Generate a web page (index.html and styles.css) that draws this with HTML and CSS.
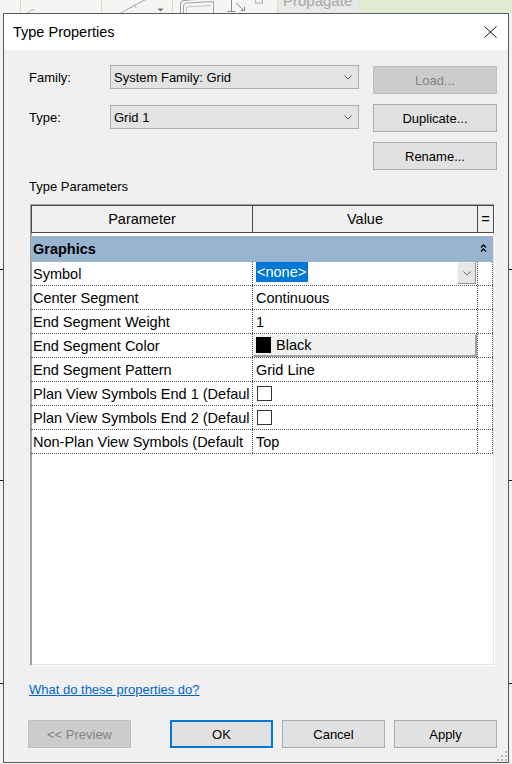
FILE: index.html
```html
<!DOCTYPE html>
<html lang="en">
<head>
<meta charset="utf-8">
<title>Type Properties</title>
<link rel="stylesheet" href="styles.css">
</head>
<body>
<div class="app">
  <div class="ribbon">
    <div class="rseg rseg-1"></div>
    <div class="rseg rseg-2">
      <svg class="ricon" width="80" height="13" viewBox="0 0 80 13"><path d="M6.5 13 L9.5 10.5 L14 9.5" fill="none" stroke="#b4b4b4"/></svg>
    </div>
    <div class="rseg rseg-3">
      <svg class="ricon" width="70" height="13" viewBox="0 0 70 13"><path d="M19 13 L32 5.5 L45 -1" fill="none" stroke="#a8a8a8"/><path d="M29 8 L33 5 L34 8" fill="none" stroke="#b8b8b8"/><path d="M55.5 8.5 L61.5 8.5 L58.5 11.5 Z" fill="#6f6f6f"/></svg>
    </div>
    <div class="rseg rseg-4">
      <svg class="ricon" width="104" height="13" viewBox="0 0 104 13"><path d="M7.5 13 L7.5 4 Q7.5 1 11 0.5 L38 -2" fill="none" stroke="#9a9a9a"/><path d="M10.5 13 L10.5 6 Q10.5 3.5 13.5 3 L40.5 1.5 L40.5 13" fill="none" stroke="#a5a5a5"/><path d="M13.5 13 L13.5 7 L38 5.5" fill="none" stroke="#c2c2c2"/><path d="M58.5 0 L58.5 12 M54.5 11.5 L62.5 11.5" fill="none" stroke="#8a8a8a"/><path d="M63 3 L71 10.5 M67.5 10.5 L71.5 10.5 L71.5 6.5" fill="none" stroke="#8a8a8a"/><rect x="82.5" y="-2" width="7" height="5" fill="none" stroke="#b0b0b0"/></svg>
    </div>
    <div class="rseg rseg-prop"><span class="prop-text">Propagate</span></div>
    <div class="rseg rseg-rest"></div>
  </div>
  <svg class="canvas" width="512" height="751" viewBox="0 0 512 751">
    <path d="M0 256.5 H512 M0 467.5 H512 M0 670.5 H512" stroke="#1a1a1a" stroke-width="1"/>
  </svg>
</div>

<div class="dialog">
  <div class="titlebar">
    <span class="title">Type Properties</span>
    <svg class="close" width="13" height="12" viewBox="0 0 13 12"><path d="M0.5 0.5 L12.5 11.5 M12.5 0.5 L0.5 11.5" fill="none" stroke="#111" stroke-width="1"/></svg>
  </div>

  <div class="content">
    <div class="top">
      <div class="fields">
        <div class="field">
          <span class="label">Family:</span>
          <div class="combo"><span>System Family: Grid</span><svg class="chev" width="8" height="5" viewBox="0 0 8 5"><path d="M0.5 0.5 L4 4 L7.5 0.5" fill="none" stroke="#5a5a5a"/></svg></div>
        </div>
        <div class="field">
          <span class="label">Type:</span>
          <div class="combo"><span>Grid 1</span><svg class="chev" width="8" height="5" viewBox="0 0 8 5"><path d="M0.5 0.5 L4 4 L7.5 0.5" fill="none" stroke="#5a5a5a"/></svg></div>
        </div>
      </div>
      <div class="side">
        <div class="btn disabled">Load...</div>
        <div class="btn">Duplicate...</div>
        <div class="btn">Rename...</div>
      </div>
    </div>

    <div class="section-label">Type Parameters</div>

    <div class="grid">
      <div class="grid-head">
        <div class="hcell hc-param">Parameter</div>
        <div class="hcell hc-value">Value</div>
        <div class="hcell hc-eq">=</div>
      </div>
      <div class="group">
        <span class="group-name">Graphics</span>
        <svg class="collapse" width="7" height="8" viewBox="0 0 7 8"><path d="M1 3.5 L3.5 1 L6 3.5 M1 7.5 L3.5 5 L6 7.5" fill="none" stroke="#000" stroke-width="1.3"/></svg>
      </div>
      <div class="row">
        <div class="cell c-param">Symbol</div>
        <div class="cell c-value"><span class="sel">&lt;none&gt;</span><span class="dd"><svg width="8" height="5" viewBox="0 0 8 5"><path d="M0.5 0.5 L4 4 L7.5 0.5" fill="none" stroke="#6a6a6a"/></svg></span></div>
        <div class="cell c-eq"></div>
      </div>
      <div class="row">
        <div class="cell c-param">Center Segment</div>
        <div class="cell c-value">Continuous</div>
        <div class="cell c-eq"></div>
      </div>
      <div class="row">
        <div class="cell c-param">End Segment Weight</div>
        <div class="cell c-value">1</div>
        <div class="cell c-eq"></div>
      </div>
      <div class="row">
        <div class="cell c-param">End Segment Color</div>
        <div class="cell c-value c-flush"><div class="color-btn"><span class="swatch"></span><span>Black</span></div></div>
        <div class="cell c-eq"></div>
      </div>
      <div class="row">
        <div class="cell c-param">End Segment Pattern</div>
        <div class="cell c-value">Grid Line</div>
        <div class="cell c-eq"></div>
      </div>
      <div class="row">
        <div class="cell c-param">Plan View Symbols End 1 (Defaul</div>
        <div class="cell c-value"><span class="check"></span></div>
        <div class="cell c-eq"></div>
      </div>
      <div class="row">
        <div class="cell c-param">Plan View Symbols End 2 (Defaul</div>
        <div class="cell c-value"><span class="check"></span></div>
        <div class="cell c-eq"></div>
      </div>
      <div class="row">
        <div class="cell c-param">Non-Plan View Symbols (Default</div>
        <div class="cell c-value">Top</div>
        <div class="cell c-eq"></div>
      </div>
    </div>

    <a class="help" href="#">What do these properties do?</a>

    <div class="footer">
      <div class="btn fbtn disabled preview">&lt;&lt; Preview</div>
      <div class="btn fbtn default">OK</div>
      <div class="btn fbtn">Cancel</div>
      <div class="btn fbtn last">Apply</div>
    </div>
  </div>

  <svg class="grip" width="10" height="10" viewBox="0 0 10 10">
    <g fill="#b8b8b8"><rect x="8" y="0" width="2" height="2"/><rect x="4" y="4" width="2" height="2"/><rect x="8" y="4" width="2" height="2"/><rect x="0" y="8" width="2" height="2"/><rect x="4" y="8" width="2" height="2"/><rect x="8" y="8" width="2" height="2"/></g>
  </svg>
</div>
</body>
</html>
```

FILE: styles.css
```css
* { box-sizing: border-box; }

html, body {
  margin: 0;
  padding: 0;
}

body {
  width: 512px;
  height: 764px;
  overflow: hidden;
  position: relative;
  background: #f2f2f2;
  font-family: "Liberation Sans", Arial, sans-serif;
  color: #000;
}

/* ---------- background application ---------- */
.app {
  display: flex;
  flex-direction: column;
  height: 764px;
}

.ribbon {
  display: flex;
  height: 13px;
  overflow: hidden;
  background: #f5f6f3;
  flex: none;
}

.rseg {
  height: 13px;
  border-right: 1px solid #d3e2c0;
  flex: none;
  overflow: hidden;
}

.ricon { display: block; }

.rseg-1 { width: 21px; }
.rseg-2 { width: 81px; }
.rseg-3 { width: 71px; }
.rseg-4 { width: 105px; }

.rseg-prop {
  width: 82px;
  background: #e8e8e8;
  padding-left: 5px;
  border-right: 1px solid #dde6cf;
}

.prop-text {
  display: block;
  margin-top: -7px;
  font-size: 15px;
  line-height: 16px;
  color: #a6a6a6;
  white-space: nowrap;
}

.rseg-rest {
  flex: 1;
  background: #e2ebd4;
  border-right: none;
}

.canvas {
  display: block;
  flex: none;
}

/* ---------- dialog window ---------- */
.dialog {
  position: absolute;
  left: 3px;
  top: 13px;
  width: 506px;
  height: 750px;
  border: 1px solid #595959;
  background: #f0f0f0;
  display: flex;
  flex-direction: column;
}

.titlebar {
  height: 36px;
  flex: none;
  background: #ffffff;
  display: flex;
  align-items: center;
  justify-content: space-between;
  padding: 0 11px 0 9px;
}

.title {
  font-size: 14.5px;
}

.close { display: block; }

.content {
  flex: 1;
  padding: 15px 10px 0 25px;
  display: flex;
  flex-direction: column;
  font-size: 13px;
}

.top {
  display: flex;
  align-items: flex-start;
}

.fields {
  width: 330px;
  flex: none;
  display: flex;
  flex-direction: column;
  gap: 16px;
}

.field {
  display: flex;
  align-items: center;
  height: 24px;
}

.label {
  width: 81px;
  flex: none;
}

.combo {
  width: 249px;
  height: 24px;
  flex: none;
  border: 1px solid #adadad;
  background: #e3e3e3;
  display: flex;
  align-items: center;
  justify-content: space-between;
  padding: 0 6px 0 3px;
}

.chev { display: block; }

.side {
  width: 124px;
  flex: none;
  margin-left: 14px;
  margin-top: 1px;
  display: flex;
  flex-direction: column;
  gap: 10px;
}

.btn {
  height: 28px;
  border: 1px solid #adadad;
  background: #e1e1e1;
  display: flex;
  align-items: center;
  justify-content: center;
  font-size: 13px;
  white-space: nowrap;
}

.btn.disabled {
  background: #cccccc;
  border-color: #bfbfbf;
  color: #838383;
}

.section-label {
  margin-top: 9px;
  line-height: 16px;
}

/* ---------- property grid ---------- */
.grid {
  margin-top: 9px;
  margin-left: 1px;
  width: 465px;
  height: 462px;
  flex: none;
  background: #ffffff;
  border: 1px solid;
  border-color: #a0a0a0 #ffffff #ffffff #a0a0a0;
  box-shadow: inset 1px 1px 0 #a0a0a0, inset -1px -1px 0 #e3e3e3;
  font-size: 14.5px;
  overflow: hidden;
}

.grid-head {
  display: flex;
  width: 463px;
  height: 28px;
  border: 1px solid #4a4a4a;
  border-right: none;
  background: #f0f0f0;
}

.hcell {
  display: flex;
  align-items: center;
  justify-content: center;
  border-right: 1px solid #4a4a4a;
  font-size: 14.5px;
  flex: none;
}

.hc-param { width: 221px; }
.hc-value { width: 225px; }
.hc-eq { width: 16px; }

.group {
  margin-top: 3px;
  width: 462px;
  height: 26px;
  background: #99b4d1;
  display: flex;
  align-items: center;
  justify-content: space-between;
  padding: 0 6px 0 2px;
}

.group-name {
  font-weight: bold;
  font-size: 14.5px;
}

.collapse {
  display: block;
  margin-top: -2px;
}

.row {
  display: flex;
  width: 462px;
  height: 24px;
  border-bottom: 1px dotted #555;
}

.cell {
  display: flex;
  align-items: center;
  white-space: nowrap;
  overflow: hidden;
  flex: none;
  border-right: 1px dotted #555;
}

.c-param {
  width: 222px;
  padding-left: 2px;
}

.c-value {
  width: 225px;
  padding-left: 3px;
}

.c-eq { width: 15px; }

.c-flush {
  padding-left: 0;
  align-items: stretch;
}

.sel {
  align-self: flex-start;
  height: 20px;
  line-height: 20px;
  background: #0078d7;
  color: #ffffff;
  padding: 0 2px 0 1px;
}

.dd {
  align-self: flex-start;
  margin-left: auto;
  margin-right: 1px;
  width: 19px;
  height: 22px;
  background: #e6e6e6;
  border: 1px solid;
  border-color: #f4f4f4 #8f8f8f #8f8f8f #f4f4f4;
  display: flex;
  align-items: center;
  justify-content: center;
}

.dd svg { display: block; }

.color-btn {
  flex: 1;
  display: flex;
  align-items: center;
  background: #f0f0f0;
  border-top: 1px solid #ffffff;
  border-left: 1px solid #ffffff;
  border-right: 2px solid #a0a0a0;
  border-bottom: 2px solid #a0a0a0;
  padding-left: 2px;
}

.swatch {
  width: 15px;
  height: 16px;
  background: #000;
  margin-right: 5px;
  flex: none;
}

.check {
  width: 15px;
  height: 15px;
  margin-left: 1px;
  border: 1px solid #333333;
  background: #ffffff;
  flex: none;
}

/* ---------- bottom ---------- */
.help {
  margin-top: 16px;
  line-height: 16px;
  color: #0066cc;
  text-decoration: underline;
  align-self: flex-start;
}

.footer {
  margin-top: 22px;
  margin-left: -1px;
  display: flex;
}

.fbtn {
  width: 103px;
  flex: none;
  margin-right: 9px;
}

.fbtn.preview { margin-right: 39px; }
.fbtn.last { margin-right: 0; }

.fbtn.default {
  border: 2px solid #0078d7;
}

.grip {
  position: absolute;
  right: 1px;
  bottom: 1px;
  display: block;
}
```
